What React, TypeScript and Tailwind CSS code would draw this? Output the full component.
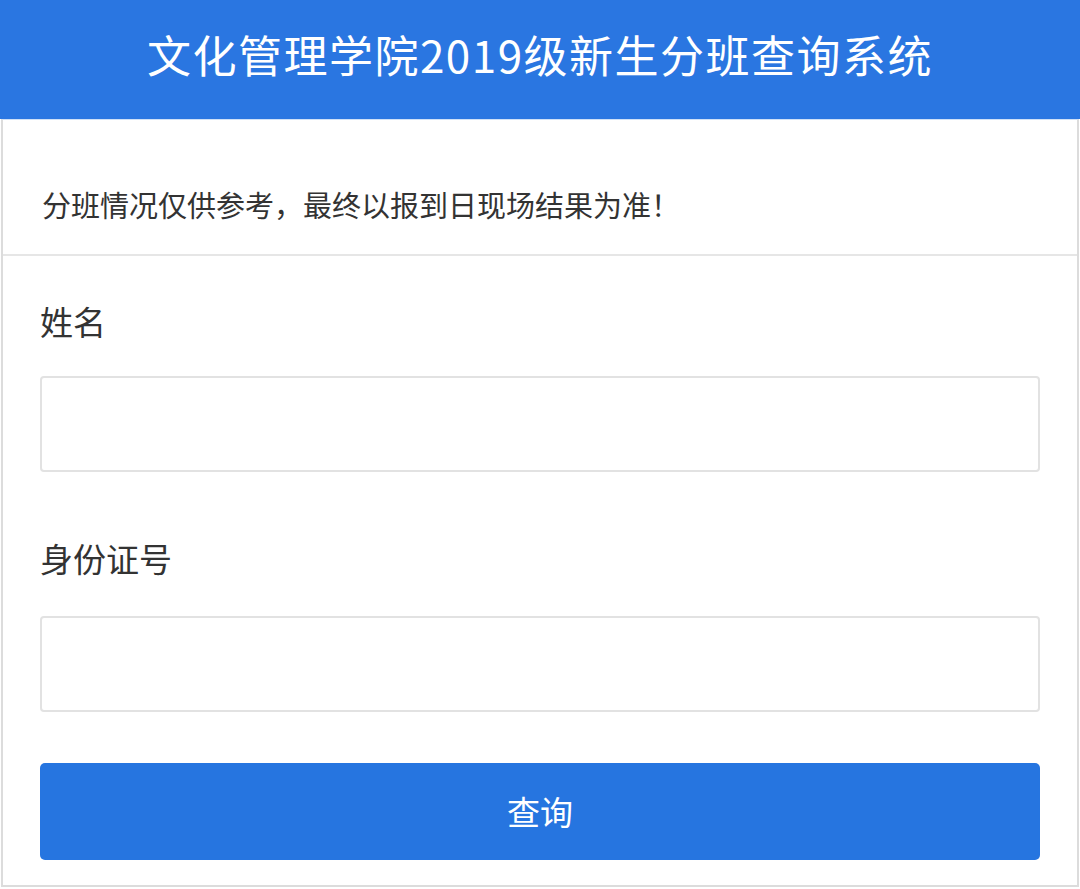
import React from "react";

const font = { fontFamily: '"Noto Sans CJK SC", "Noto Sans", sans-serif' };

export default function App() {
  return (
    <div className="w-[1080px] h-[889px] bg-white overflow-hidden" style={font}>
      <header className="h-[119px] bg-[#2a76e1] flex items-center justify-center">
        <h1 className="text-[44px] text-white leading-none tracking-[1.5px] pb-[12px]">
          文化管理学院2019级新生分班查询系统
        </h1>
      </header>
      <div className="mx-[1px] h-[768px] border-2 border-t border-[#dcdcdc] border-t-[#cfe0f7] bg-white">
        <div className="h-[136px] flex items-center px-[39px] pt-[34px] border-b-2 border-[#e6e6e6]">
          <p className="text-[29px] text-[#333] leading-none">
            分班情况仅供参考，最终以报到日现场结果为准！
          </p>
        </div>
        <form className="px-[37px] pt-[49px] flex flex-col" onSubmit={(e) => e.preventDefault()}>
          <label className="text-[33px] text-[#333] leading-none">姓名</label>
          <input
            type="text"
            className="mt-[38px] h-[96px] w-full rounded-[4px] border-2 border-[#e2e2e2] bg-white outline-none"
          />
          <label className="mt-[70px] text-[33px] text-[#333] leading-none">身份证号</label>
          <input
            type="text"
            className="mt-[41px] h-[96px] w-full rounded-[4px] border-2 border-[#e2e2e2] bg-white outline-none"
          />
          <button
            type="submit"
            className="mt-[51px] h-[97px] w-full rounded-[5px] bg-[#2675e0] text-white text-[33px] leading-none"
          >
            查询
          </button>
        </form>
      </div>
    </div>
  );
}
